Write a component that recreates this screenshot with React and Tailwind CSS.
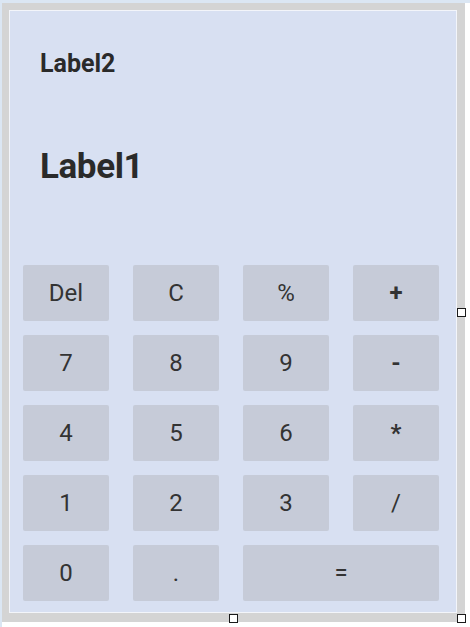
import React from 'react';

const keys = [
	{ label: 'Del' },
	{ label: 'C' },
	{ label: '%' },
	{ label: '+', bold: true },
	{ label: '7' },
	{ label: '8' },
	{ label: '9' },
	{ label: '-', bold: true },
	{ label: '4' },
	{ label: '5' },
	{ label: '6' },
	{ label: '*', bold: true },
	{ label: '1' },
	{ label: '2' },
	{ label: '3' },
	{ label: '/' },
	{ label: '0' },
	{ label: '.' },
	{ label: '=', wide: true },
];

function Handle({ className }) {
	return <div className={`absolute w-[9px] h-[9px] bg-white border-[1.5px] border-[#1a1a1a] ${className}`} />;
}

export default function App() {
	return (
		<div
			className="relative w-[470px] h-[627px] bg-white border-l-2 border-t-[3px] border-[#dbe6f3]"
			style={{ fontFamily: 'Roboto, "Liberation Sans", sans-serif' }}
		>
			{/* design surface frame */}
			<div className="w-[463px] h-[619px] bg-[#d4d4d4] pl-[7px] pt-[7px]">
				<div className="w-[448px] h-[603px] bg-[#d8e0f2] border border-[#f3f5fa] flex flex-col">
					<div className="pl-[30px] pt-[40px] text-[25px] leading-[25px] font-bold text-[#2a2a2a]">Label2</div>
					<div className="pl-[30px] mt-[73px] text-[35px] leading-[36px] font-bold tracking-[-0.4px] text-[#2a2a2a]">
						Label1
					</div>

					<div className="ml-[13px] mt-[80px] grid grid-cols-[repeat(4,86px)] auto-rows-[56px] gap-x-[24px] gap-y-[14px]">
						{keys.map((k) => (
							<button
								key={k.label}
								className={`flex items-center justify-center rounded-[2px] bg-[#c6cbd8] text-[24px] leading-[24px] text-[#333333] ${
									k.bold ? 'font-bold' : 'font-normal'
								} ${k.wide ? 'col-span-2' : ''}`}
							>
								{k.label}
							</button>
						))}
					</div>
				</div>
			</div>

			{/* selection handles */}
			<Handle className="left-[455px] top-[305px]" />
			<Handle className="left-[227px] top-[611px]" />
			<Handle className="left-[455px] top-[611px]" />
		</div>
	);
}
